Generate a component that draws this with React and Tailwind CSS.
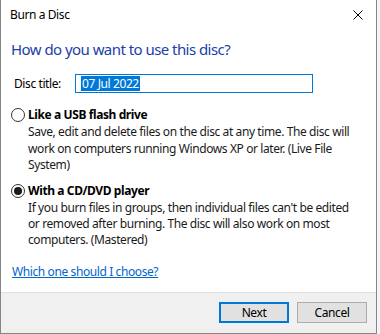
export default function App() {
  const font = { fontFamily: '"Noto Sans", "Segoe UI", Arial, sans-serif' };
  return (
    <div className="w-[380px] h-[334px] bg-[#e8e8e8] flex overflow-hidden" style={font}>
      <div className="w-[377px] h-[334px] shrink-0 bg-white border-l border-r border-b border-[#858585] flex flex-col text-[12px] tracking-[-0.4px] text-black">
        <div className="h-[28px] shrink-0 flex items-center justify-between pl-[9px] pr-[9px]">
          <span className="text-[12px] leading-none mt-[1px]">Burn a Disc</span>
          <svg width="10" height="10" viewBox="0 0 10 10" className="mr-[4px] mt-[1px]">
            <path d="M0.5 0.5 L9.5 9.5 M9.5 0.5 L0.5 9.5" stroke="#000" strokeWidth="1" fill="none" />
          </svg>
        </div>
        <div className="flex-1 pl-[10px] pr-[11px]">
          <div className="mt-[10px] text-[15px] tracking-[-0.55px] leading-[22px] text-[#1c3ea8]">How do you want to use this disc?</div>
          <div className="mt-[14px] flex items-center">
            <span className="shrink-0 ml-[3px] w-[61px] leading-[16px]">Disc title:</span>
            <div className="shrink-0 w-[238px] h-[19px] border border-[#0078d7] flex items-center pl-[5px]">
              <span className="bg-[#0078d7] text-white leading-[15px] px-[1px]">07 Jul 2022</span>
            </div>
          </div>
          <div className="mt-[14px] flex items-center gap-[3px]">
            <span className="shrink-0 w-[14px] h-[14px] rounded-full border border-[#333] bg-white" />
            <span className="font-bold leading-[16px]">Like a USB flash drive</span>
          </div>
          <div className="ml-[17px] w-[328px] mt-[1px] leading-[16.5px] text-[#1a1a1a]">
            Save, edit and delete files on the disc at any time. The disc will work on computers running Windows XP or later. (Live File System)
          </div>
          <div className="mt-[9px] flex items-center gap-[3px]">
            <span className="shrink-0 w-[14px] h-[14px] rounded-full border border-[#333] bg-white flex items-center justify-center">
              <span className="w-[8px] h-[8px] rounded-full bg-[#1a1a1a]" />
            </span>
            <span className="font-bold leading-[16px]">With a CD/DVD player</span>
          </div>
          <div className="ml-[17px] w-[328px] mt-[1px] leading-[16px] text-[#1a1a1a]">
            If you burn files in groups, then individual files can't be edited or removed after burning. The disc will also work on most computers. (Mastered)
          </div>
          <div className="mt-[16px] ml-[1px] text-[#0066cc] underline leading-[16px]">Which one should I choose?</div>
        </div>
        <div className="h-[41px] shrink-0 bg-[#f0f0f0] border-t border-[#dfdfdf] flex items-start justify-end gap-[8px] pr-[9px] pt-[9px]">
          <button className="w-[70px] h-[21px] bg-[#e1e1e1] border-2 border-[#0078d7] text-[12px] leading-none flex items-center justify-center">Next</button>
          <button className="w-[70px] h-[21px] bg-[#e1e1e1] border border-[#adadad] text-[12px] leading-none flex items-center justify-center">Cancel</button>
        </div>
      </div>
      <div className="flex-1 bg-[#f5f5f5]" />
    </div>
  );
}
